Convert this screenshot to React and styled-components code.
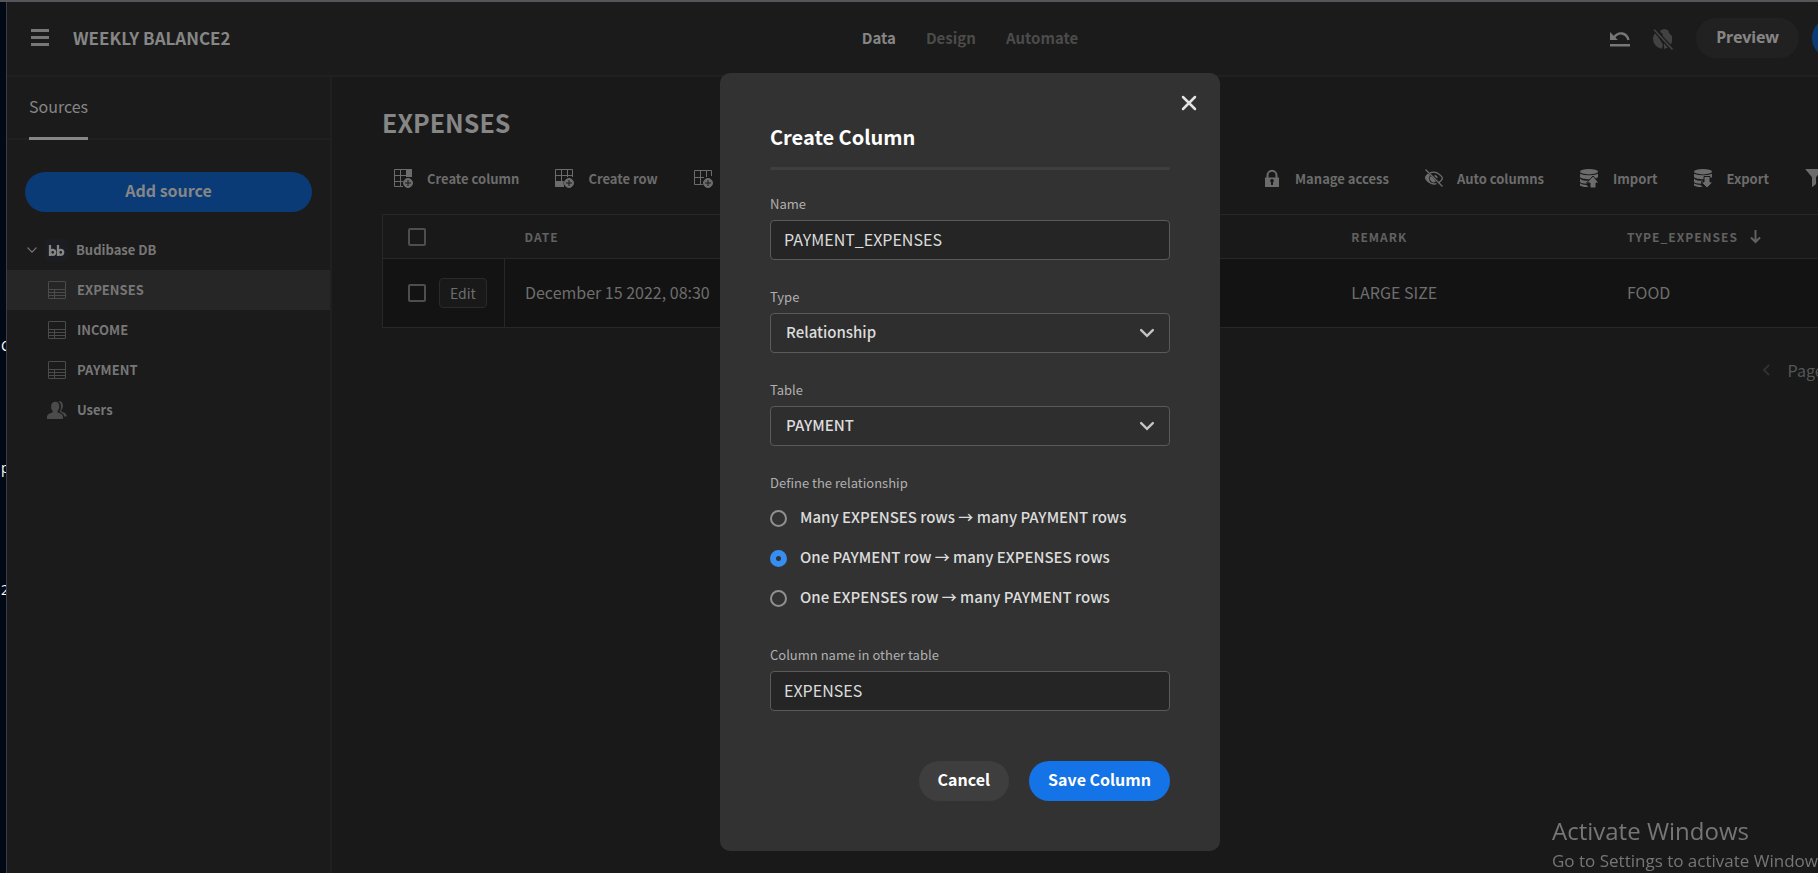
import styled, { createGlobalStyle } from "styled-components";
import { useState } from "react";

const GlobalStyle = createGlobalStyle`
    * {
        box-sizing: border-box;
    }
    body {
        margin: 0;
        overflow: hidden;
        background: #1a1a1a;
        color: #868686;
        font-family: "Noto Sans CJK SC", "Noto Sans", sans-serif;
    }
    button, input, select {
        font-family: inherit;
    }
`;

const tables = ["EXPENSES", "INCOME", "PAYMENT"];
const desktopLabels = ["C", "p", "2"];
const relationships = [
    "Many EXPENSES rows → many PAYMENT rows",
    "One PAYMENT row → many EXPENSES rows",
    "One EXPENSES row → many PAYMENT rows",
];

const TableIcon = () => (
    <svg width="18" height="18" viewBox="0 0 18 18" fill="none" stroke="currentColor">
        <rect x="0.5" y="0.5" width="17" height="17" rx="0.5" />
        <path d="M1 8.500h16M1 11.500h16M1 14.500h16M6.500 8v9" />
    </svg>
);

const UsersIcon = () => (
    <svg width="20" height="18" viewBox="0 0 20 18" fill="currentColor">
        <path d="M8.400 0.800c2.600 0 3.900 1.900 3.900 4.500 0 2-.7 3.500-1.600 4.500-.4.500-.3 1.500.2 1.700 2.800.9 5.100 2 5.100 4.200V18H0v-2.300c0-2.200 2.600-3.300 5.200-4.200.7-.2.700-1.200.3-1.700-.9-1-1.400-2.500-1.400-4.500 0-2.600 1.600-4.500 4.300-4.500Z" />
        <path d="M11.200 0.600c3-1 4.700 1.300 4.700 4.200 0 1.900-.6 3.200-1.500 4.200-.4.500-.4 1.200.1 1.400 2.800 1 5.300 2.300 5.300 5H17.300c-.3-2.100-2-3.300-4.800-4.600.8-1.300 1.500-2.900 1.500-5.200 0-2.100-.9-4.200-2.800-5Z" />
    </svg>
);

// the cells form a 3x3 grid, the filled part marks what gets created
const GridAddIcon = ({ kind }) => (
    <svg width="19" height="19" viewBox="0 0 19 19" fill="none" stroke="currentColor">
        {kind === "view" ? (
            <path d="M9 15.500H.5v-14h17V7M6.500 2v13M12.500 2v6M1 8.500h9" />
        ) : (
            <path d="M9 17.500H.5V.5h17V8M6.500 1v17M12.500 1v7M1 6.500h16M1 12.500h8" />
        )}
        {kind === "column" && <path d="M12.500 .5h5v7h-5z" fill="currentColor" />}
        {kind === "row" && <path d="M.5 12.500h8v5h-8z" fill="currentColor" />}
        <circle cx="14" cy="14" r="5.500" fill="#191919" stroke="none" />
        <circle cx="14" cy="14" r="4.500" fill="currentColor" />
        <path d="M14 11v6M11 14h6" stroke="#191919" />
    </svg>
);

const LockIcon = () => (
    <svg width="18" height="18" viewBox="0 0 18 18">
        <path d="M4.500 9V6.300a4.500 4.500 0 0 1 9 0V9" fill="none" stroke="currentColor" strokeWidth="2" />
        <path d="M2 8.500h14V18H2z" fill="currentColor" />
        <path d="M9 10a1.800 1.800 0 0 1 1 3.300V16H8v-2.700A1.800 1.800 0 0 1 9 10z" fill="#191919" />
    </svg>
);

const HiddenIcon = () => (
    <svg width="18" height="18" viewBox="0 0 18 18" fill="none" stroke="currentColor">
        <path d="M5 3.900C7 3 11 2.800 13.500 4.700 16 6.500 17.300 8.200 17.300 9c0 1-1.500 3.200-3.500 4.600M3.300 4.900C1.500 6.300.7 8 .7 9c0 1.500 4 6 8.300 6 .8 0 1.700-.1 2.500-.4" strokeWidth="1.300" />
        <path d="M3 5C1 6.800.7 8.300.7 9c0 1.200 2 3.700 4.200 4.800C3.500 11 3.300 8 4.700 6.300z" fill="currentColor" />
        <path d="M6 7a3.800 3.800 0 0 0 4.800 5.800L9.500 10.500zM9.500 6A3.500 3.500 0 0 1 12.700 9.500L9.500 7.500z" fill="currentColor" stroke="none" />
        <path d="M.500 .5l17 17" strokeWidth="1.300" />
    </svg>
);

const DataIcon = ({ up }) => (
    <svg width="19" height="19" viewBox="0 0 19 19" fill="currentColor">
        <ellipse cx="9" cy="2.700" rx="9" ry="2.700" />
        <path d="M0 4.500C2 6.800 16 6.800 18 4.500V8C16 11 2 11 0 8zM0 9.500c1.500 2 5 2.300 9 2.300l-2 3C3 14.700.8 14 0 13zM0 14.300c1.500 1.300 4 1.600 6.500 1.700l2 2C4 18.200.8 17.500 0 16.500z" />
        {up ? (
            <path d="M13 7l6 7h-3v5h-6v-5H6.500z" stroke="#191919" />
        ) : (
            <path d="M10 7.500h6V13h3l-6 6-6-6h3z" stroke="#191919" />
        )}
    </svg>
);

const FilterIcon = () => (
    <svg width="18" height="18" viewBox="0 0 18 18" fill="currentColor">
        <path d="M.2 0h17.600L11 8.300V15l-4 3.300v-10z" />
    </svg>
);

const UndoIcon = () => (
    <svg width="20" height="16" viewBox="0 0 20 16">
        <path d="M4 6.500C8.500 0 16.500 1.500 18.500 9" fill="none" stroke="currentColor" strokeWidth="2.300" />
        <path d="M0 1l7.800 8H0z" fill="currentColor" />
        <path d="M0 13h20v2.500H0z" fill="currentColor" />
    </svg>
);

const GlobeOffIcon = () => (
    <svg width="20" height="22" viewBox="0 0 20 22" fill="currentColor">
        <path d="M2.500 4.500C-.500 8-.500 12 1 15c1.500 3 4.500 5.500 8 5.500l1-4z" />
        <path d="M7 2.500l4-1.500 4 1 1 3 3 3v6l-1.500 3L9 8.500l1-2.500-2-1z" />
        <path d="M11 15l4 4.500-4 1.500z" />
        <path d="M1 1.500l18.500 20" stroke="#1b1b1b" strokeWidth="4" />
        <path d="M1 1.500l18.500 20" stroke="currentColor" strokeWidth="1.800" />
    </svg>
);

const Chevron = ({ size = 12, stroke = 2 }) => (
    <svg width={size} height={size} viewBox="0 0 12 12" fill="none" stroke="currentColor" strokeWidth={stroke} strokeLinecap="round">
        <path d="M1 3.500l5 5 5-5" />
    </svg>
);

const BudibaseLogo = () => (
    <svg width="23" height="22" viewBox="0 0 23 22">
        <rect width="23" height="22" rx="2" fill="#1c1d22" />
        <g fill="none" stroke="#868686" strokeWidth="2.300">
            <path d="M5 6v11" />
            <circle cx="7.700" cy="13.300" r="2.500" />
            <path d="M13 6v11" />
            <circle cx="15.700" cy="13.300" r="2.500" />
        </g>
    </svg>
);

export default function App() {
    const [relation, setRelation] = useState(1);

    return (
        <>
            <GlobalStyle />
            <SScreen>
                <SDesktop>
                    {desktopLabels.map((label) => (
                        <SDesktopLabel key={label}>{label}</SDesktopLabel>
                    ))}
                </SDesktop>
                <SWindow>
                    <SHeader>
                        <SHeaderLeft>
                            <SMenuButton aria-label="Menu">
                                <SMenuLine />
                                <SMenuLine />
                                <SMenuLine />
                            </SMenuButton>
                            <SAppName>WEEKLY BALANCE2</SAppName>
                        </SHeaderLeft>
                        <SNav>
                            <SNavLink href="#data" $active>Data</SNavLink>
                            <SNavLink href="#design">Design</SNavLink>
                            <SNavLink href="#automate">Automate</SNavLink>
                        </SNav>
                        <SHeaderRight>
                            <SIconButton aria-label="Revert"><UndoIcon /></SIconButton>
                            <SIconButton aria-label="Unpublish" $dim><GlobeOffIcon /></SIconButton>
                            <SPreview>Preview</SPreview>
                            <SPublish aria-label="Publish" />
                        </SHeaderRight>
                    </SHeader>
                    <SBody>
                        <SSidebar>
                            <STabs>
                                <STab href="#sources">Sources</STab>
                            </STabs>
                            <SAddSource>Add source</SAddSource>
                            <STree>
                                <SSource href="#db">
                                    <Chevron size={10} stroke={1.500} />
                                    <BudibaseLogo />
                                    <STreeText>Budibase DB</STreeText>
                                </SSource>
                                {tables.map((name) => (
                                    <STreeItem key={name} href={`#${name}`} $selected={name === "EXPENSES"}>
                                        <STreeIcon><TableIcon /></STreeIcon>
                                        <STreeText>{name}</STreeText>
                                    </STreeItem>
                                ))}
                                <STreeItem href="#users">
                                    <STreeIcon><UsersIcon /></STreeIcon>
                                    <STreeText>Users</STreeText>
                                </STreeItem>
                            </STree>
                        </SSidebar>
                        <SMain>
                            <STitle>EXPENSES</STitle>
                            <SToolbar>
                                <SToolGroup>
                                    <STool><GridAddIcon kind="column" />Create column</STool>
                                    <STool><GridAddIcon kind="row" />Create row</STool>
                                    <STool><GridAddIcon kind="view" />Create view</STool>
                                </SToolGroup>
                                <SToolGroup>
                                    <STool><LockIcon />Manage access</STool>
                                    <STool><HiddenIcon />Auto columns</STool>
                                    <STool><DataIcon up />Import</STool>
                                    <STool><DataIcon />Export</STool>
                                    <STool><FilterIcon />Filter</STool>
                                </SToolGroup>
                            </SToolbar>
                            <STable>
                                <thead>
                                    <tr>
                                        <SHeadCell $narrow><SCheckbox type="checkbox" aria-label="Select all rows" /></SHeadCell>
                                        <SHeadCell>DATE</SHeadCell>
                                        <SHeadCell />
                                        <SHeadCell />
                                        <SHeadCell>REMARK</SHeadCell>
                                        <SHeadCell>
                                            <SSorted>
                                                TYPE_EXPENSES
                                                <svg width="11" height="14" viewBox="0 0 11 14" fill="none" stroke="currentColor" strokeWidth="2">
                                                    <path d="M5.500 0v12M1 7.500l4.500 4.500L10 7.500" />
                                                </svg>
                                            </SSorted>
                                        </SHeadCell>
                                    </tr>
                                </thead>
                                <tbody>
                                    <tr>
                                        <SCell $narrow>
                                            <SRowTools>
                                                <SCheckbox type="checkbox" aria-label="Select row" />
                                                <SEdit>Edit</SEdit>
                                            </SRowTools>
                                        </SCell>
                                        <SCell>December 15 2022, 08:30</SCell>
                                        <SCell />
                                        <SCell />
                                        <SCell>LARGE SIZE</SCell>
                                        <SCell>FOOD</SCell>
                                    </tr>
                                </tbody>
                            </STable>
                            <SPager>
                                <SPageButton aria-label="Previous page">
                                    <svg width="8" height="12" viewBox="0 0 8 12" fill="none" stroke="currentColor" strokeWidth="2">
                                        <path d="M7 1L2 6l5 5" />
                                    </svg>
                                </SPageButton>
                                Page 1
                                <SPageButton aria-label="Next page">
                                    <svg width="8" height="12" viewBox="0 0 8 12" fill="none" stroke="currentColor" strokeWidth="2">
                                        <path d="M1 1l5 5-5 5" />
                                    </svg>
                                </SPageButton>
                            </SPager>
                        </SMain>
                    </SBody>
                    <SOverlay>
                        <SModal role="dialog" aria-labelledby="modal-title">
                            <SClose aria-label="Close">
                                <svg width="16" height="16" viewBox="0 0 16 16" fill="none" stroke="currentColor" strokeWidth="2.500" strokeLinecap="round">
                                    <path d="M2 2l12 12M14 2L2 14" />
                                </svg>
                            </SClose>
                            <SModalTitle id="modal-title">Create Column</SModalTitle>
                            <SDivider />
                            <SFields>
                                <SField>
                                    <SLabel htmlFor="name">Name</SLabel>
                                    <SInput id="name" defaultValue="PAYMENT_EXPENSES" />
                                </SField>
                                <SField>
                                    <SLabel htmlFor="type">Type</SLabel>
                                    <SSelectBox>
                                        <SSelect id="type"><option>Relationship</option></SSelect>
                                        <Chevron size={14} />
                                    </SSelectBox>
                                </SField>
                                <SField>
                                    <SLabel htmlFor="table">Table</SLabel>
                                    <SSelectBox>
                                        <SSelect id="table"><option>PAYMENT</option></SSelect>
                                        <Chevron size={14} />
                                    </SSelectBox>
                                </SField>
                                <SFieldset>
                                    <SLegend>Define the relationship</SLegend>
                                    {relationships.map((text, i) => (
                                        <SRadioLabel key={text}>
                                            <SRadio type="radio" name="relation" checked={relation === i} onChange={() => setRelation(i)} />
                                            <SRadioText>{text}</SRadioText>
                                        </SRadioLabel>
                                    ))}
                                </SFieldset>
                                <SField>
                                    <SLabel htmlFor="other">Column name in other table</SLabel>
                                    <SInput id="other" defaultValue="EXPENSES" />
                                </SField>
                            </SFields>
                            <SActions>
                                <SButton>Cancel</SButton>
                                <SButton $primary>Save Column</SButton>
                            </SActions>
                        </SModal>
                    </SOverlay>
                </SWindow>
                <SWatermark>
                    <SWatermarkTitle>Activate Windows</SWatermarkTitle>
                    <SWatermarkText>Go to Settings to activate Windows.</SWatermarkText>
                </SWatermark>
            </SScreen>
        </>
    );
}

const SScreen = styled.div`
    display: flex;
    height: 100vh;
    overflow: hidden;
    border-top: 2px solid #56565a;
`;

const SDesktop = styled.div`
    flex: 0 0 7px;
    overflow: hidden;
    padding: 332px 0 0 1px;
    background: #010914;
    border-right: 1px solid #3a3d45;
`;

const SDesktopLabel = styled.div`
    height: 122px;
    font-family: "Open Sans", sans-serif;
    font-size: 14px;
    line-height: 24px;
    color: #fff;
`;

// the app window runs past the right and bottom edges of the screen
const SWindow = styled.div`
    position: relative;
    flex: 0 0 calc(100% + 108px);
    height: calc(100% + 49px);
    display: flex;
    flex-direction: column;
`;

const SHeader = styled.header`
    flex: none;
    display: grid;
    grid-template-columns: 1fr auto 1fr;
    align-items: center;
    height: 75px;
    padding: 0 24px 2px;
    background: #1b1b1b;
    border-bottom: 2px solid #202020;
`;

const SHeaderLeft = styled.div`
    display: flex;
    align-items: center;
    gap: 24px;
`;

const SMenuButton = styled.button`
    display: flex;
    flex-direction: column;
    gap: 4px;
    width: 18px;
    padding: 0;
    border: 0;
    background: none;
`;

const SMenuLine = styled.span`
    height: 3px;
    background: #777;
`;

const SAppName = styled.h1`
    margin: 0;
    font-size: 17px;
    font-weight: 700;
    line-height: 24px;
    color: #868686;
`;

const SNav = styled.nav`
    display: flex;
    gap: 30px;
`;

const SNavLink = styled.a`
    font-size: 15px;
    font-weight: 700;
    line-height: 24px;
    text-decoration: none;
    color: ${(p) => (p.$active ? "#868686" : "#4b4b4b")};
`;

const SHeaderRight = styled.div`
    display: flex;
    justify-content: flex-end;
    align-items: center;
`;

const SIconButton = styled.button`
    display: flex;
    margin-right: 23px;
    padding: 2px 0 0;
    border: 0;
    background: none;
    color: ${(p) => (p.$dim ? "#424242" : "#777")};
`;

const SPreview = styled.button`
    height: 40px;
    padding: 0 20px 2px;
    border: 0;
    border-radius: 20px;
    background: #212121;
    color: #868686;
    font-family: "Noto Sans", sans-serif;
    font-size: 16px;
    font-weight: 700;
`;

const SPublish = styled.button`
    width: 97px;
    height: 40px;
    margin-left: 13px;
    border: 0;
    border-radius: 20px;
    background: #0a3b76;
`;

const SBody = styled.div`
    flex: 1;
    display: flex;
`;

const SSidebar = styled.aside`
    flex: 0 0 325px;
    background: #1b1b1b;
    border-right: 2px solid #202020;
`;

const STabs = styled.div`
    display: flex;
    height: 63px;
    padding: 0 22px;
    border-bottom: 2px solid #202020;
`;

const STab = styled.a`
    height: 63px;
    padding-top: 17px;
    border-bottom: 3px solid #868686;
    font-size: 16px;
    line-height: 24px;
    text-decoration: none;
    color: #868686;
`;

const SAddSource = styled.button`
    display: block;
    width: calc(100% - 36px);
    height: 40px;
    margin: 32px 18px 18px;
    padding: 0 0 4px;
    border: 0;
    border-radius: 20px;
    background: #0a3b76;
    color: #868686;
    font-size: 16px;
    font-weight: 700;
`;

const STree = styled.nav`
    display: flex;
    flex-direction: column;
    font-size: 13px;
    font-weight: 700;
`;

const SSource = styled.a`
    display: flex;
    align-items: center;
    gap: 8px;
    height: 40px;
    padding-left: 20px;
    color: #777;
    text-decoration: none;
`;

const STreeItem = styled.a`
    display: flex;
    align-items: center;
    gap: 10px;
    height: 40px;
    padding-left: 40px;
    background: ${(p) => (p.$selected ? "#262626" : "none")};
    color: #777;
    text-decoration: none;
`;

const STreeIcon = styled.span`
    display: flex;
    justify-content: center;
    width: 20px;
    color: #4b4b4b;
`;

const STreeText = styled.span`
    padding-bottom: 2px;
`;

const SMain = styled.main`
    flex: 1;
    min-width: 0;
    padding: 25px 50px;
    background: #191919;
`;

const STitle = styled.h2`
    margin: 0;
    font-size: 25px;
    font-weight: 700;
    line-height: 40px;
    color: #868686;
`;

const SToolbar = styled.div`
    display: flex;
    justify-content: space-between;
    padding: 21px 0;
`;

const SToolGroup = styled.div`
    display: flex;
    gap: 12px;
`;

const STool = styled.button`
    display: flex;
    align-items: center;
    gap: 14px;
    height: 30px;
    padding: 0 12px;
    border: 0;
    background: none;
    color: #6c6c6c;
    font-size: 13px;
    font-weight: 700;
    white-space: nowrap;
`;

const STable = styled.table`
    width: 100%;
    border: 1px solid #272727;
    border-collapse: collapse;
    table-layout: fixed;
`;

const SHeadCell = styled.th`
    width: ${(p) => (p.$narrow ? "122px" : "auto")};
    height: 44px;
    padding: 0 ${(p) => (p.$narrow ? "25px" : "20px")};
    border-bottom: 1px solid #272727;
    text-align: left;
    font-size: 12px;
    font-weight: 700;
    letter-spacing: 1px;
    color: #616161;
`;

const SCell = styled.td`
    height: 69px;
    padding: ${(p) => (p.$narrow ? "0 0 0 25px" : "0 20px 2px")};
    border-right: ${(p) => (p.$narrow ? "1px solid #272727" : "0")};
    background: #131313;
    font-size: 16px;
    color: #6e6e6e;
`;

const SSorted = styled.span`
    display: flex;
    align-items: center;
    gap: 12px;
`;

const SRowTools = styled.div`
    display: flex;
    align-items: center;
    gap: 13px;
`;

const SCheckbox = styled.input`
    appearance: none;
    display: block;
    width: 18px;
    height: 18px;
    margin: 0;
    border: 2px solid #4e4e4e;
    border-radius: 2px;
`;

const SEdit = styled.button`
    height: 30px;
    padding: 0 10px;
    border: 1px solid #2a2a2a;
    border-radius: 4px;
    background: #191919;
    color: #6e6e6e;
    font-size: 14px;
`;

const SPager = styled.div`
    display: flex;
    justify-content: flex-end;
    align-items: center;
    gap: 18px;
    padding: 30px 21px;
    font-size: 16px;
    line-height: 24px;
    color: #565656;
`;

const SPageButton = styled.button`
    display: flex;
    padding: 0;
    border: 0;
    background: none;
    color: #303030;
`;

const SOverlay = styled.div`
    position: absolute;
    inset: 0;
    display: flex;
    justify-content: center;
    align-items: center;
`;

const SModal = styled.section`
    position: relative;
    width: 500px;
    padding: 50px;
    border-radius: 10px;
    background: #323232;
`;

const SClose = styled.button`
    position: absolute;
    top: 22px;
    right: 23px;
    display: flex;
    padding: 0;
    border: 0;
    background: none;
    color: #e3e3e3;
`;

const SModalTitle = styled.h2`
    margin: 0;
    font-size: 20px;
    font-weight: 700;
    line-height: 28px;
    color: #fff;
`;

const SDivider = styled.hr`
    height: 3px;
    margin: 16px 0 22px;
    border: 0;
    border-radius: 2px;
    background: #3e3e3e;
`;

const SFields = styled.div`
    display: flex;
    flex-direction: column;
    gap: 25px;
`;

const SField = styled.div`
    display: flex;
    flex-direction: column;
`;

const SLabel = styled.label`
    padding-bottom: 4px;
    font-size: 13px;
    line-height: 24px;
    color: #b0b0b0;
`;

const SInput = styled.input`
    width: 100%;
    height: 40px;
    padding: 0 13px 3px;
    border: 1px solid #5a5a5a;
    border-radius: 4px;
    background: #252525;
    color: #dcdcdc;
    font-size: 16px;
    outline: none;
`;

const SSelectBox = styled.div`
    display: grid;
    align-items: center;
    color: #c4c4c4;

    > * {
        grid-area: 1 / 1;
    }
    > svg {
        justify-self: end;
        margin-right: 16px;
        pointer-events: none;
    }
`;

const SSelect = styled.select`
    appearance: none;
    width: 100%;
    height: 40px;
    padding: 0 15px 3px;
    border: 1px solid #5a5a5a;
    border-radius: 4px;
    background: #2e2e2e;
    color: #dcdcdc;
    font-size: 15px;
    font-weight: 500;
`;

const SFieldset = styled.fieldset`
    min-width: 0;
    margin: 0;
    padding: 0;
    border: 0;
`;

const SLegend = styled.legend`
    padding: 0 0 3px;
    font-size: 13px;
    line-height: 24px;
    color: #b0b0b0;
`;

const SRadioLabel = styled.label`
    display: flex;
    align-items: center;
    gap: 13px;
    height: 40px;
    font-size: 15px;
    font-weight: 500;
    color: #dcdcdc;
`;

const SRadioText = styled.span`
    padding-bottom: 3px;
`;

const SRadio = styled.input`
    appearance: none;
    width: 17px;
    height: 17px;
    margin: 0;
    border: ${(p) => (p.checked ? "6px solid #378ef0" : "2px solid #909090")};
    border-radius: 50%;
`;

const SActions = styled.div`
    display: flex;
    justify-content: flex-end;
    gap: 20px;
    padding-top: 50px;
`;

const SButton = styled.button`
    height: 40px;
    padding: 0 19px 4px;
    border: 0;
    border-radius: 20px;
    background: ${(p) => (p.$primary ? "#1473e6" : "#3e3e3e")};
    color: #fff;
    font-size: 16px;
    font-weight: 700;
`;

// sits over every window, like the system draws it
const SWatermark = styled.div`
    position: fixed;
    left: calc(100% - 266px);
    bottom: 0;
    font-family: "Open Sans", sans-serif;
    color: #767676;
    white-space: nowrap;
`;

const SWatermarkTitle = styled.div`
    padding-bottom: 2px;
    font-size: 24px;
    line-height: 32px;
`;

const SWatermarkText = styled.div`
    font-size: 17px;
    line-height: 24px;
`;
